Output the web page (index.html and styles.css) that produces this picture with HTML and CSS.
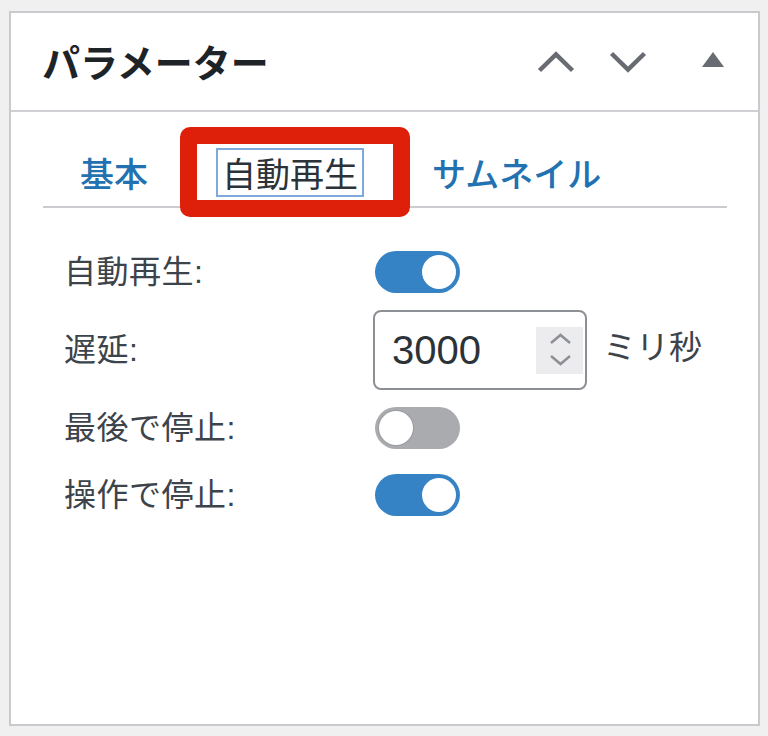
FILE: index.html
```html
<!DOCTYPE html>
<html lang="ja">
<head>
<meta charset="utf-8">
<title>パラメーター</title>
<link rel="stylesheet" href="styles.css">
</head>
<body>
<div class="panel">
  <div class="panel-header">
    <h2 class="panel-title">パラメーター</h2>
    <div class="panel-actions">
      <button class="icon-btn" aria-label="上へ移動">
        <svg width="38" height="22" viewBox="0 0 38 22"><polyline points="2.5,19.5 19,3.5 35.5,19.5" fill="none" stroke="#686c72" stroke-width="4.5" stroke-linejoin="miter"/></svg>
      </button>
      <button class="icon-btn" aria-label="下へ移動">
        <svg width="38" height="22" viewBox="0 0 38 22"><polyline points="2.5,2.5 19,18.5 35.5,2.5" fill="none" stroke="#686c72" stroke-width="4.5" stroke-linejoin="miter"/></svg>
      </button>
      <button class="icon-btn icon-btn-toggle" aria-label="パネルを切り替え">
        <svg width="22" height="15" viewBox="0 0 22 15"><polygon points="0,15 11,0 22,15" fill="#686c72"/></svg>
      </button>
    </div>
  </div>
  <div class="panel-body">
    <div class="tabs">
      <a class="tab">基本</a>
      <a class="tab tab-active"><span class="tab-label">自動再生</span><span class="highlight"></span></a>
      <a class="tab">サムネイル</a>
    </div>
    <div class="settings">
      <div class="setting-row">
        <span class="setting-label">自動再生:</span>
        <span class="switch switch-on"><span class="knob"></span></span>
      </div>
      <div class="setting-row setting-row-input">
        <span class="setting-label">遅延:</span>
        <div class="number-field">
          <div class="number-input">
            <span class="number-value">3000</span>
            <span class="spinner">
              <svg width="47" height="47" viewBox="0 0 47 47"><polyline points="15,16 24.5,8 34,16" fill="none" stroke="#8c8f94" stroke-width="2.5"/><polyline points="15,29 24.5,37 34,29" fill="none" stroke="#8c8f94" stroke-width="2.5"/></svg>
            </span>
          </div>
          <span class="unit">ミリ秒</span>
        </div>
      </div>
      <div class="setting-row">
        <span class="setting-label">最後で停止:</span>
        <span class="switch switch-off"><span class="knob"></span></span>
      </div>
      <div class="setting-row setting-row-last">
        <span class="setting-label">操作で停止:</span>
        <span class="switch switch-on"><span class="knob"></span></span>
      </div>
    </div>
  </div>
</div>
</body>
</html>
```
FILE: styles.css
```css
html, body {
  margin: 0;
  padding: 0;
}
body {
  background: #f0f0f1;
  font-family: "Liberation Sans", "Noto Sans CJK JP", sans-serif;
  padding: 11px 8px 10px 9px;
  height: 736px;
  box-sizing: border-box;
}
.panel {
  width: 751px;
  height: 715px;
  box-sizing: border-box;
  background: #fff;
  border: 2px solid #c9cacd;
}
.panel-header {
  height: 99px;
  box-sizing: border-box;
  border-bottom: 2px solid #cfd0d3;
  display: flex;
  align-items: center;
  padding: 0 9px 0 31px;
}
.panel-title {
  margin: 0;
  flex: 1;
  font-family: "Noto Sans CJK JP", sans-serif;
  font-size: 38px;
  font-weight: 700;
  color: #1d2327;
  letter-spacing: 0;
  line-height: 1;
  padding-bottom: 2px;
}
.panel-actions {
  display: flex;
  align-items: center;
}
.icon-btn {
  width: 72px;
  height: 60px;
  border: 0;
  background: transparent;
  padding: 0;
  display: flex;
  align-items: center;
  justify-content: center;
}
.icon-btn-toggle {
  margin-left: 13px;
}
.icon-btn-toggle svg {
  margin-bottom: 4px;
}
.panel-body {
  padding: 0 31px 0 32px;
}
.tabs {
  display: flex;
  margin-top: 38px;
  padding-bottom: 11px;
  border-bottom: 2px solid #cbccd0;
}
.tab {
  position: relative;
  padding: 0 37px;
  font-family: "Noto Sans CJK JP", sans-serif;
  font-size: 34px;
  line-height: 45px;
  font-weight: 500;
  color: #2271b1;
}
.tab-active {
  color: #2c3338;
  font-weight: 400;
}
.tab-label {
  display: inline-block;
  padding: 0 4px;
  margin: 0 -4px;
  outline: 2px solid #7fa9dd;
}
.highlight {
  position: absolute;
  left: -5px;
  top: -23px;
  width: 230px;
  height: 90px;
  box-sizing: border-box;
  border: 17px solid #de200b;
  border-radius: 10px;
}
.settings {
  margin-top: 43px;
  padding-left: 21px;
  display: flex;
  flex-direction: column;
  gap: 17px;
}
.setting-row {
  display: grid;
  grid-template-columns: 309px auto;
  align-items: center;
  min-height: 42px;
}
.setting-row-last {
  margin-top: 8px;
}
.setting-label {
  font-size: 32px;
  color: #3c434a;
  line-height: 42px;
  letter-spacing: 0.5px;
}
.switch {
  position: relative;
  display: block;
  width: 85px;
  height: 42px;
  border-radius: 21px;
  margin-left: 2px;
}
.switch-on {
  background: #3582c4;
}
.switch-off {
  background: #a9abae;
}
.knob {
  position: absolute;
  top: 4px;
  width: 34px;
  height: 34px;
  border-radius: 50%;
  background: #fff;
}
.switch-on .knob {
  right: 4px;
}
.switch-off .knob {
  left: 4px;
  box-shadow: 0 0 0 1px #9a9c9f;
}
.number-field {
  display: flex;
  align-items: center;
}
.number-input {
  width: 214px;
  height: 80px;
  box-sizing: border-box;
  border: 2px solid #8c8f94;
  border-radius: 8px;
  display: flex;
  align-items: center;
  padding: 0 2px 0 17px;
}
.number-value {
  font-size: 40px;
  color: #2c3338;
  flex: 1;
}
.spinner {
  width: 47px;
  height: 47px;
  background: #ececef;
  display: block;
}
.spinner svg {
  display: block;
}
.unit {
  margin-left: 16px;
  margin-bottom: 10px;
  font-size: 33px;
  color: #3c434a;
}
```
